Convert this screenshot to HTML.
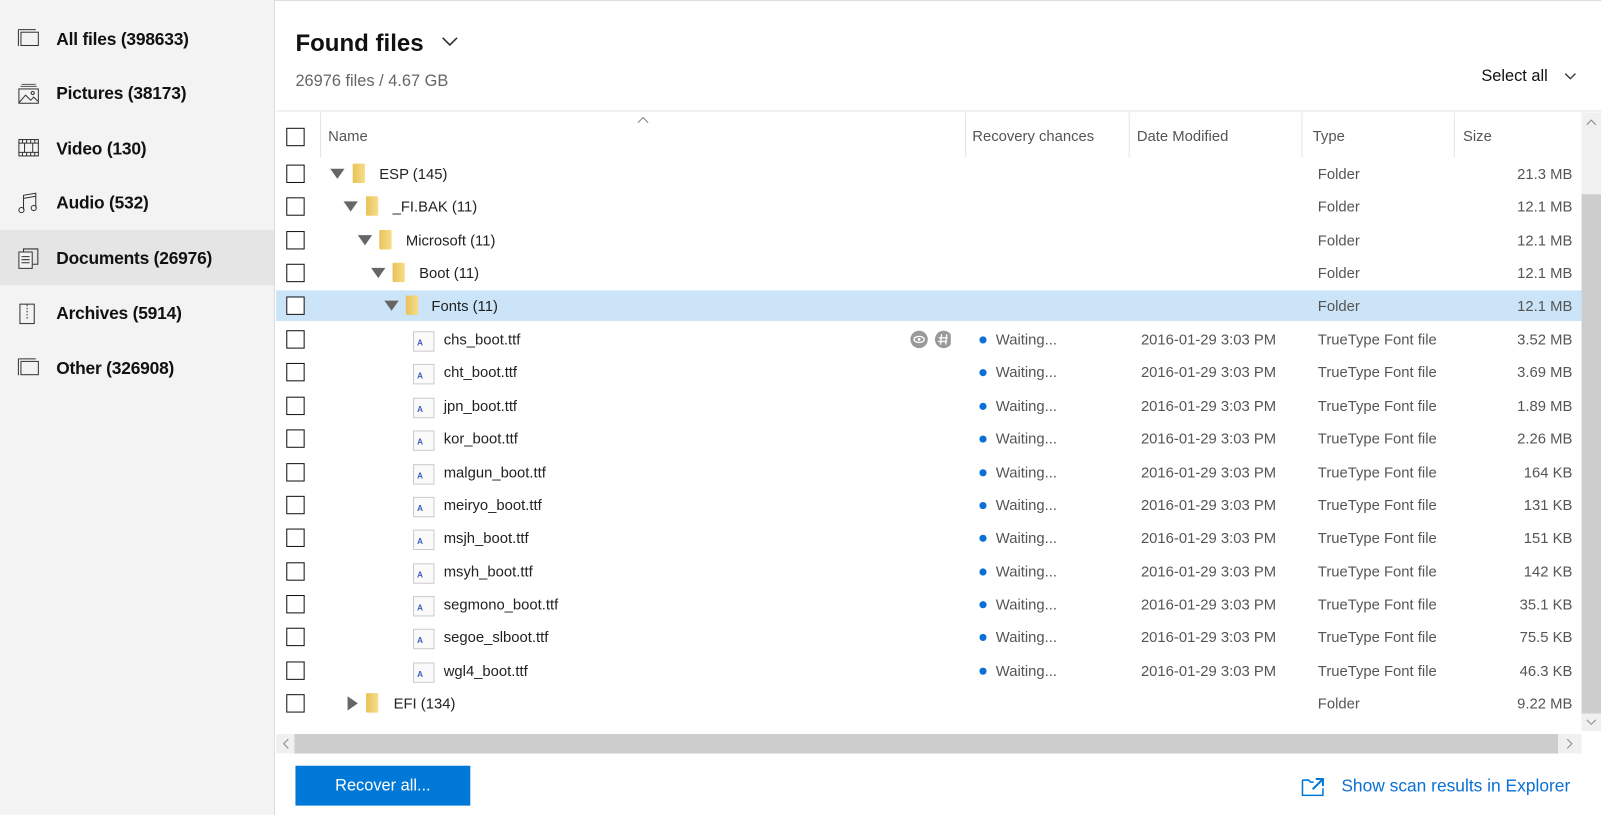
<!DOCTYPE html>
<html><head><meta charset="utf-8"><style>
html,body{margin:0;padding:0;width:1601px;height:815px;overflow:hidden;background:#fff;font-family:"Liberation Sans",sans-serif;}
#w{position:absolute;left:0;top:0;width:1566px;height:797px;transform:scale(1.02235);transform-origin:0 0;}
.a{position:absolute;}
.side{left:0;top:0;width:268px;height:797px;background:#f3f3f3;border-right:1px solid #ddd;}
.si{position:absolute;left:0;width:268px;height:54px;}
.si .t{position:absolute;left:55px;top:18px;font-size:17px;font-weight:bold;color:#111;letter-spacing:-0.2px}
.si svg{position:absolute;left:17px;top:17px}
.cb{position:absolute;left:280px;width:16px;height:16px;border:1.6px solid #111;background:#fff}
.row{position:absolute;left:270px;width:1277px;height:32px;font-size:14.5px;color:#222}
.row span{position:absolute;top:9px;white-space:nowrap}
.g{color:#555}
.tri{position:absolute;top:11px;width:0;height:0;border-left:7px solid transparent;border-right:7px solid transparent;border-top:10px solid #666}
.fold{position:absolute;top:6px;width:12px;height:19px;background:linear-gradient(90deg,#e7c358,#f8dd8a);border-radius:1px}
.fi{position:absolute;top:8px;width:19px;height:18px;border:1px solid #ccc;background:#fafafa}
.fi:after{content:"A";position:absolute;left:3px;top:6px;font-size:8px;color:#3a5cc0;font-weight:bold}
.dot{position:absolute;top:13px;width:7px;height:7px;border-radius:50%;background:#0a6fd6}
.hd{position:absolute;top:126px;font-size:14.5px;color:#555}
.vl{position:absolute;top:110px;width:1px;height:44px;background:#e5e5e5}
</style></head><body><div id="w">
<div class="a" style="left:0;top:0;width:1566px;height:1px;background:#ddd"></div>
<div class="a side">
 <div class="si" style="top:11px"><svg width="22" height="20"><path d="M1 1h17M1 1v16" stroke="#333" fill="none"/><rect x="3.5" y="3.5" width="17" height="13" stroke="#333" fill="none"/></svg><span class="t">All files (398633)</span></div>
 <div class="si" style="top:64px"><svg width="22" height="22"><path d="M4 1.5h14M3 3.5h16" stroke="#555"/><rect x="1.5" y="6" width="19" height="14" stroke="#333" fill="none"/><path d="M2 19l6-7 5 5 3-3 4 4" stroke="#333" fill="none"/><circle cx="15" cy="10" r="1.5" stroke="#333" fill="none"/></svg><span class="t">Pictures (38173)</span></div>
 <div class="si" style="top:118px"><svg width="22" height="20"><rect x="1.5" y="1.5" width="19" height="16" stroke="#333" fill="none"/><path d="M1 5h20M1 14h20M5 1v4M9 1v4M13 1v4M17 1v4M5 14v4M9 14v4M13 14v4M17 14v4M7 5v9M15 5v9" stroke="#333"/></svg><span class="t">Video (130)</span></div>
 <div class="si" style="top:171px"><svg width="22" height="22"><path d="M6 17V3l12-2v14" stroke="#333" fill="none"/><circle cx="4" cy="17.5" r="2.5" stroke="#333" fill="none"/><circle cx="16" cy="15.5" r="2.5" stroke="#333" fill="none"/><path d="M6 6l12-2" stroke="#333"/></svg><span class="t">Audio (532)</span></div>
 <div class="si" style="top:225px;background:#e5e5e5"><svg width="22" height="22"><rect x="1.5" y="4.5" width="13" height="16" stroke="#333" fill="#f3f3f3"/><path d="M6 4V1.5h14v15h-5" stroke="#333" fill="none"/><path d="M4 9h8M4 12h8M4 15h8" stroke="#333"/></svg><span class="t">Documents (26976)</span></div>
 <div class="si" style="top:279px"><svg width="22" height="22"><rect x="2.5" y="1.5" width="14" height="19" stroke="#333" fill="none"/><path d="M9.5 2v14" stroke="#333" stroke-dasharray="1.5 1.5"/></svg><span class="t">Archives (5914)</span></div>
 <div class="si" style="top:333px"><svg width="22" height="20"><path d="M1 1h17M1 1v16" stroke="#333" fill="none"/><rect x="3.5" y="3.5" width="17" height="13" stroke="#333" fill="none"/></svg><span class="t">Other (326908)</span></div>
</div>
<div class="a" style="left:289px;top:29px;font-size:23.5px;font-weight:bold;color:#111">Found files</div>
<svg class="a" style="left:432px;top:36px" width="16" height="10"><path d="M1 1l7 7 7-7" stroke="#333" stroke-width="1.6" fill="none"/></svg>
<div class="a" style="left:289px;top:71px;font-size:16px;color:#666">26976 files / 4.67 GB</div>
<div class="a" style="left:1449px;top:66px;font-size:16px;color:#111">Select all</div>
<svg class="a" style="left:1530px;top:71px" width="12" height="8"><path d="M1 1l5 5 5-5" stroke="#333" stroke-width="1.3" fill="none"/></svg>
<div class="a" style="left:270px;top:108px;width:1296px;height:1px;background:#e3e3e3"></div>
<div class="cb" style="top:125px"></div>
<div class="vl" style="left:313px"></div><div class="vl" style="left:944px"></div><div class="vl" style="left:1104px"></div><div class="vl" style="left:1273px"></div><div class="vl" style="left:1422px"></div>
<svg class="a" style="left:623px;top:114px" width="12" height="7"><path d="M1 6l5-5 5 5" stroke="#777" fill="none"/></svg>
<div class="hd" style="left:321px">Name</div><div class="hd" style="left:951px">Recovery chances</div><div class="hd" style="left:1112px">Date Modified</div><div class="hd" style="left:1284px">Type</div><div class="hd" style="left:1431px">Size</div>
<div class="a" style="left:1547px;top:110px;width:19px;height:605px;background:#f0f0f0"></div>
<div class="a" style="left:1547px;top:190px;width:19px;height:508px;background:#cdcdcd"></div>
<svg class="a" style="left:1551px;top:116px" width="11" height="7"><path d="M1 6l4.5-4.5L10 6" stroke="#888" fill="none"/></svg>
<svg class="a" style="left:1551px;top:703px" width="11" height="7"><path d="M1 1l4.5 4.5L10 1" stroke="#888" fill="none"/></svg>
<div class="a" style="left:270px;top:718px;width:1277px;height:19px;background:#f0f0f0"></div>
<div class="a" style="left:288px;top:718px;width:1236px;height:19px;background:#cdcdcd"></div>
<svg class="a" style="left:276px;top:722px" width="7" height="11"><path d="M6 1L1.5 5.5 6 10" stroke="#888" fill="none"/></svg>
<svg class="a" style="left:1532px;top:722px" width="7" height="11"><path d="M1 1l4.5 4.5L1 10" stroke="#888" fill="none"/></svg>
<div class="row" style="top:154px"><div class="cb" style="left:10px;top:7px"></div><div class="tri" style="left:53px"></div><div class="fold" style="left:75px"></div><span style="left:101px">ESP (145)</span><span class="g" style="left:1019px">Folder</span><span class="g" style="right:9px">21.3 MB</span></div>
<div class="row" style="top:186px"><div class="cb" style="left:10px;top:7px"></div><div class="tri" style="left:66px"></div><div class="fold" style="left:88px"></div><span style="left:114px">_FI.BAK (11)</span><span class="g" style="left:1019px">Folder</span><span class="g" style="right:9px">12.1 MB</span></div>
<div class="row" style="top:219px"><div class="cb" style="left:10px;top:7px"></div><div class="tri" style="left:80px"></div><div class="fold" style="left:101px"></div><span style="left:127px">Microsoft (11)</span><span class="g" style="left:1019px">Folder</span><span class="g" style="right:9px">12.1 MB</span></div>
<div class="row" style="top:251px"><div class="cb" style="left:10px;top:7px"></div><div class="tri" style="left:93px"></div><div class="fold" style="left:114px"></div><span style="left:140px">Boot (11)</span><span class="g" style="left:1019px">Folder</span><span class="g" style="right:9px">12.1 MB</span></div>
<div class="row" style="top:284px;background:#cce4f7;height:30px"><div class="cb" style="left:10px;top:6px"></div><div class="tri" style="left:106px;top:10px"></div><div class="fold" style="left:127px;top:5px"></div><span style="left:152px;top:8px">Fonts (11)</span><span class="g" style="left:1019px;top:8px">Folder</span><span class="g" style="right:9px;top:8px">12.1 MB</span></div>
<div class="row" style="top:316px"><div class="cb" style="left:10px;top:7px"></div><div class="fi" style="left:134px"></div><span style="left:164px">chs_boot.ttf</span>
 <svg style="position:absolute;left:620px;top:7px" width="40" height="18"><circle cx="9" cy="9" r="8.5" fill="#999"/><ellipse cx="9" cy="9" rx="5" ry="3" stroke="#fff" fill="none" stroke-width="1.3"/><circle cx="9" cy="9" r="1.4" fill="#fff"/><circle cx="33" cy="9" r="8.5" fill="#999"/><path d="M31 4l-1 10M36 4l-1 10M28 7.5h9M27.5 11h9" stroke="#fff" stroke-width="1.3"/></svg>
 <div class="dot" style="left:688px"></div><span class="g" style="left:704px">Waiting...</span><span class="g" style="left:846px">2016-01-29 3:03 PM</span><span class="g" style="left:1019px">TrueType Font file</span><span class="g" style="right:9px">3.52 MB</span></div>
<div class="row" style="top:348px"><div class="cb" style="left:10px;top:7px"></div><div class="fi" style="left:134px"></div><span style="left:164px">cht_boot.ttf</span><div class="dot" style="left:688px"></div><span class="g" style="left:704px">Waiting...</span><span class="g" style="left:846px">2016-01-29 3:03 PM</span><span class="g" style="left:1019px">TrueType Font file</span><span class="g" style="right:9px">3.69 MB</span></div>
<div class="row" style="top:381px"><div class="cb" style="left:10px;top:7px"></div><div class="fi" style="left:134px"></div><span style="left:164px">jpn_boot.ttf</span><div class="dot" style="left:688px"></div><span class="g" style="left:704px">Waiting...</span><span class="g" style="left:846px">2016-01-29 3:03 PM</span><span class="g" style="left:1019px">TrueType Font file</span><span class="g" style="right:9px">1.89 MB</span></div>
<div class="row" style="top:413px"><div class="cb" style="left:10px;top:7px"></div><div class="fi" style="left:134px"></div><span style="left:164px">kor_boot.ttf</span><div class="dot" style="left:688px"></div><span class="g" style="left:704px">Waiting...</span><span class="g" style="left:846px">2016-01-29 3:03 PM</span><span class="g" style="left:1019px">TrueType Font file</span><span class="g" style="right:9px">2.26 MB</span></div>
<div class="row" style="top:446px"><div class="cb" style="left:10px;top:7px"></div><div class="fi" style="left:134px"></div><span style="left:164px">malgun_boot.ttf</span><div class="dot" style="left:688px"></div><span class="g" style="left:704px">Waiting...</span><span class="g" style="left:846px">2016-01-29 3:03 PM</span><span class="g" style="left:1019px">TrueType Font file</span><span class="g" style="right:9px">164 KB</span></div>
<div class="row" style="top:478px"><div class="cb" style="left:10px;top:7px"></div><div class="fi" style="left:134px"></div><span style="left:164px">meiryo_boot.ttf</span><div class="dot" style="left:688px"></div><span class="g" style="left:704px">Waiting...</span><span class="g" style="left:846px">2016-01-29 3:03 PM</span><span class="g" style="left:1019px">TrueType Font file</span><span class="g" style="right:9px">131 KB</span></div>
<div class="row" style="top:510px"><div class="cb" style="left:10px;top:7px"></div><div class="fi" style="left:134px"></div><span style="left:164px">msjh_boot.ttf</span><div class="dot" style="left:688px"></div><span class="g" style="left:704px">Waiting...</span><span class="g" style="left:846px">2016-01-29 3:03 PM</span><span class="g" style="left:1019px">TrueType Font file</span><span class="g" style="right:9px">151 KB</span></div>
<div class="row" style="top:543px"><div class="cb" style="left:10px;top:7px"></div><div class="fi" style="left:134px"></div><span style="left:164px">msyh_boot.ttf</span><div class="dot" style="left:688px"></div><span class="g" style="left:704px">Waiting...</span><span class="g" style="left:846px">2016-01-29 3:03 PM</span><span class="g" style="left:1019px">TrueType Font file</span><span class="g" style="right:9px">142 KB</span></div>
<div class="row" style="top:575px"><div class="cb" style="left:10px;top:7px"></div><div class="fi" style="left:134px"></div><span style="left:164px">segmono_boot.ttf</span><div class="dot" style="left:688px"></div><span class="g" style="left:704px">Waiting...</span><span class="g" style="left:846px">2016-01-29 3:03 PM</span><span class="g" style="left:1019px">TrueType Font file</span><span class="g" style="right:9px">35.1 KB</span></div>
<div class="row" style="top:607px"><div class="cb" style="left:10px;top:7px"></div><div class="fi" style="left:134px"></div><span style="left:164px">segoe_slboot.ttf</span><div class="dot" style="left:688px"></div><span class="g" style="left:704px">Waiting...</span><span class="g" style="left:846px">2016-01-29 3:03 PM</span><span class="g" style="left:1019px">TrueType Font file</span><span class="g" style="right:9px">75.5 KB</span></div>
<div class="row" style="top:640px"><div class="cb" style="left:10px;top:7px"></div><div class="fi" style="left:134px"></div><span style="left:164px">wgl4_boot.ttf</span><div class="dot" style="left:688px"></div><span class="g" style="left:704px">Waiting...</span><span class="g" style="left:846px">2016-01-29 3:03 PM</span><span class="g" style="left:1019px">TrueType Font file</span><span class="g" style="right:9px">46.3 KB</span></div>
<div class="row" style="top:672px"><div class="cb" style="left:10px;top:7px"></div><div style="position:absolute;left:70px;top:9px;width:0;height:0;border-top:7px solid transparent;border-bottom:7px solid transparent;border-left:10px solid #666"></div><div class="fold" style="left:88px"></div><span style="left:115px">EFI (134)</span><span class="g" style="left:1019px">Folder</span><span class="g" style="right:9px">9.22 MB</span></div>
<div class="a" style="left:289px;top:749px;width:171px;height:39px;background:#0078d7;color:#fff;font-size:16px;text-align:center;line-height:39px">Recover all...</div>
<svg class="a" style="left:1273px;top:759px" width="24" height="20"><path d="M1 4v15h20v-7M1 4h6l2 2h3" stroke="#0078d7" stroke-width="1.5" fill="none"/><path d="M11 13l9-9M14 3h7v7" stroke="#0078d7" stroke-width="2" fill="none"/></svg>
<div class="a" style="left:1312px;top:759px;font-size:17px;color:#0a6fd6">Show scan results in Explorer</div>
</div></body></html>
